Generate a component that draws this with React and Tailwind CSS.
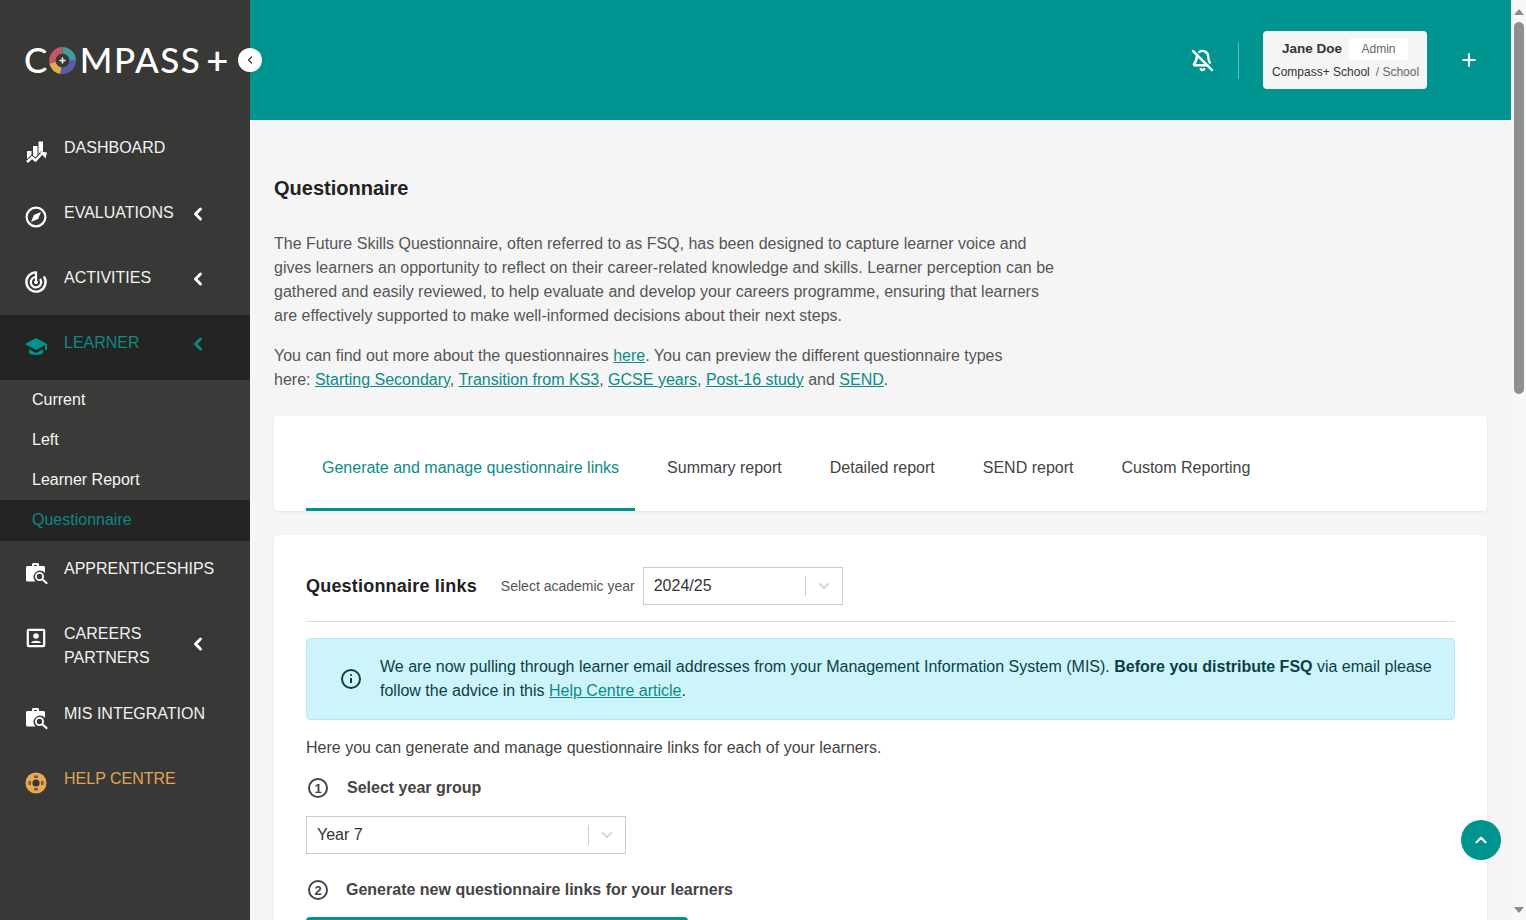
import React from 'react';
import { BellOff, ChevronDown, ChevronLeft, ChevronUp, Plus } from 'lucide-react';

const arial = '[font-family:"Liberation_Sans",Arial,sans-serif]';

function DashIcon() {
  return (
    <svg width="24" height="24" viewBox="0 0 24 24" fill="none">
      <path d="M3 11h4.500v9H3zM9 6h4.500v13H9zM14.500 1.500H19V15h-4.500z" fill="#fff" />
      <path d="M2.500 22.500l5.500-5 3.500 3 6-6.500 5 2" stroke="#383836" strokeWidth="4.500" />
      <path d="M3 22l5-4.500 3.500 3 6-6.500" stroke="#fff" strokeWidth="2.500" />
      <path d="M15.500 11.500l7.500 1-1.500 6z" fill="#fff" />
    </svg>
  );
}

function CompassIcon() {
  return (
    <svg width="24" height="24" viewBox="0 0 24 24" fill="none">
      <circle cx="12" cy="12" r="9.400" stroke="#fff" strokeWidth="2.200" />
      <path d="M17 7l-2.900 7.100L7 17l2.900-7.100z" fill="#fff" />
    </svg>
  );
}

function RadarIcon() {
  return (
    <svg width="24" height="24" viewBox="0 0 24 24" fill="none" stroke="#fff" strokeLinecap="round">
      <path d="M12 2.400A9.600 9.600 0 1 0 20.300 7.200" strokeWidth="2.400" />
      <path d="M12 7a5.200 5.200 0 1 0 4.500 2.600" strokeWidth="2.200" />
      <path d="M12 3v9" strokeWidth="2.200" />
      <circle cx="12" cy="12.200" r="1.500" fill="#fff" strokeWidth="1" />
    </svg>
  );
}

function CapIcon() {
  return (
    <svg width="24" height="24" viewBox="0 0 24 24" fill="#009490">
      <path d="M12 3L1 9l11 6 9-4.900V15h2V9z" />
      <path d="M5 14.200V18c2 2.600 12 2.600 14 0v-3.800l-7 3.800z" />
    </svg>
  );
}

function CaseSearchIcon() {
  return (
    <svg width="24" height="24" viewBox="0 0 24 24" fill="none">
      <path d="M8 5V3.500C8 2.600 8.600 2 9.500 2h4c.9 0 1.500.6 1.500 1.500V5h4.500c.8 0 1.500.7 1.500 1.500V20.500H3.500C2.700 20.500 2 19.800 2 19V6.500C2 5.700 2.700 5 3.500 5zm2-1v1h3V4z" fill="#fff" />
      <circle cx="16" cy="16" r="6.500" fill="#383836" />
      <circle cx="15.500" cy="15.500" r="3.600" stroke="#fff" strokeWidth="1.800" />
      <path d="M18.500 18.500l4 3.500" stroke="#fff" strokeWidth="2.200" strokeLinecap="round" />
    </svg>
  );
}

function ContactIcon() {
  return (
    <svg width="24" height="24" viewBox="0 0 24 24" fill="none">
      <rect x="3.800" y="3.800" width="16.400" height="16.400" rx="1" stroke="#fff" strokeWidth="2.200" />
      <circle cx="12" cy="10" r="2.800" fill="#fff" />
      <path d="M7 17c.6-3 9.400-3 10 0z" fill="#fff" />
    </svg>
  );
}

function LifebuoyIcon() {
  return (
    <svg width="24" height="24" viewBox="0 0 24 24" fill="none">
      <circle cx="12" cy="12" r="10.500" fill="#e8a955" />
      <circle cx="12" cy="12" r="3.600" fill="#383836" />
      <path d="M10 4.500h4v2.500h-4zM10 17h4v2.500h-4zM4.500 10H7v4H4.500zM17 10h2.500v4H17z" fill="#7d5f35" />
    </svg>
  );
}

function InfoIcon() {
  return (
    <svg width="20" height="20" viewBox="0 0 20 20" fill="none" stroke="#0b3f45">
      <circle cx="10" cy="10" r="9" strokeWidth="2" />
      <path d="M10 9v5" strokeWidth="2" />
      <circle cx="10" cy="6" r="1.100" fill="#0b3f45" stroke="none" />
    </svg>
  );
}

function LogoRing() {
  return (
    <svg width="27" height="27" viewBox="0 0 36 36" fill="none" strokeWidth="9">
      <path d="M18 4.500A13.500 13.500 0 0 0 5 21" stroke="#c8555f" />
      <path d="M5 21a13.500 13.500 0 0 0 11 10.400" stroke="#e3ac4c" />
      <path d="M16 31.400A13.500 13.500 0 0 0 31.500 18" stroke="#5a5ba6" />
      <path d="M31.500 18A13.500 13.500 0 0 0 18 4.500" stroke="#3f9c9c" />
      <circle cx="18" cy="18" r="9" fill="#383836" stroke="none" />
      <path d="M18 14v8M14 18h8" stroke="#fff" strokeWidth="2" />
    </svg>
  );
}

function NavItem({ icon, label, chevron, tall, colour = 'text-[#f2f2f2]', chevronColour = 'text-white', bg = '' }) {
  return (
    <div className={`flex items-start pl-6 pt-[16px] ${tall ? 'h-[80px]' : 'h-[65px]'} ${bg}`}>
      <span className="flex w-6 h-6 shrink-0 mt-[4px]">{icon}</span>
      <span className={`ml-4 ${chevron ? 'w-[122px]' : ''} shrink-0 text-base leading-6 whitespace-pre-line ${colour}`}>{label}</span>
      {chevron && (
        <ChevronLeft
          size={20}
          strokeWidth={3.500}
          className={`ml-[2px] ${tall ? 'mt-[12px]' : 'mt-[3px]'} ${chevronColour}`}
        />
      )}
    </div>
  );
}

function SubItem({ label, active }) {
  return (
    <div className={`flex items-center pl-8 text-base ${active ? 'h-[41px] pb-px bg-[#242422] text-[#0d8885]' : 'h-10 text-[#f7f7f7]'}`}>
      {label}
    </div>
  );
}

function Sidebar() {
  return (
    <aside className="w-[250px] shrink-0 h-full bg-[#383836] flex flex-col">
      <div className="relative h-[120px] flex items-center pl-6">
        <div className="flex items-center text-white text-[35px] leading-none -mt-[2px] [font-family:Lato,sans-serif] font-medium tracking-[1.500px]">
          <span>C</span>
          <span className="flex mt-[2px]"><LogoRing /></span>
          <span className="ml-[4px]">MPASS</span>
          <span className="ml-[5px] text-[38px] font-semibold">+</span>
        </div>
        <div className="absolute left-[238px] top-[48px] w-6 h-6 rounded-full bg-white flex items-center justify-center">
          <ChevronLeft size={12} strokeWidth={2.500} className="text-[#383836]" />
        </div>
      </div>
      <NavItem icon={<DashIcon />} label="DASHBOARD" />
      <NavItem icon={<CompassIcon />} label="EVALUATIONS" chevron />
      <NavItem icon={<RadarIcon />} label="ACTIVITIES" chevron />
      <NavItem
        icon={<CapIcon />}
        label="LEARNER"
        chevron
        colour="text-[#0d8885]"
        chevronColour="text-[#0d8885]"
        bg="bg-[#242422]"
      />
      <div className="bg-[#3a3a38]">
        <SubItem label="Current" />
        <SubItem label="Left" />
        <SubItem label="Learner Report" />
        <SubItem label="Questionnaire" active />
      </div>
      <NavItem icon={<CaseSearchIcon />} label="APPRENTICESHIPS" />
      <NavItem icon={<ContactIcon />} label={'CAREERS\nPARTNERS'} chevron tall />
      <NavItem icon={<CaseSearchIcon />} label="MIS INTEGRATION" />
      <NavItem icon={<LifebuoyIcon />} label="HELP CENTRE" colour="text-[#e0a558]" />
    </aside>
  );
}

function Header() {
  return (
    <header className="h-[120px] shrink-0 bg-[#009490] flex items-center justify-end pr-[32px]">
      <BellOff size={23} strokeWidth={2.500} className="text-white" />
      <div className="w-px h-[37px] bg-[#5fbcb9] ml-[24px] mr-[24px]" />
      <div className="w-[164px] h-[58px] bg-[#f5f5f5] rounded flex flex-col pl-[9px] pt-[7px]">
        <div className="flex items-center h-[22px]">
          <span className="ml-[10px] text-[13.5px] font-bold text-[#333]">Jane Doe</span>
          <span className="ml-[7px] w-[59px] h-[22px] bg-white rounded text-xs text-[#666] flex items-center justify-center">Admin</span>
        </div>
        <div className="mt-[4px] text-xs leading-4 whitespace-nowrap">
          <span className="text-[#333]">Compass+ School</span>
          <span className="ml-[6px] text-[#666]">/ School</span>
        </div>
      </div>
      <Plus size={20} strokeWidth={2.500} className="text-white ml-[32px]" />
    </header>
  );
}

function Select({ value, width }) {
  return (
    <div className={`${width} h-[38px] bg-white border border-[#ccc] flex items-center pl-[10px] text-base text-[#333]`}>
      <span className="flex-1">{value}</span>
      <span className="w-px h-5 bg-[#ccc]" />
      <ChevronDown size={18} strokeWidth={2} className="mx-[9px] text-[#ccc]" />
    </div>
  );
}

function A({ children }) {
  return <a href="#" className="text-[#0c8b88] underline">{children}</a>;
}

function StepNumber({ n }) {
  return (
    <span className="w-5 h-5 rounded-full border-2 border-[#444] flex items-center justify-center text-[13px] font-bold leading-none text-[#444]">{n}</span>
  );
}

function Tabs() {
  const tabs = ['Summary report', 'Detailed report', 'SEND report', 'Custom Reporting'];
  return (
    <div className="h-[95px] bg-white rounded shadow-[0_1px_3px_rgba(0,0,0,0.08)] flex px-8">
      <div className="h-full px-4 pt-[11px] border-b-[3px] border-[#009490] text-[#0c8b88] flex items-center">
        Generate and manage questionnaire links
      </div>
      {tabs.map((t) => (
        <div key={t} className="h-full ml-4 px-4 pt-[11px] pb-[3px] flex items-center text-[#444]">{t}</div>
      ))}
    </div>
  );
}

function LinksCard() {
  return (
    <div className="mt-6 bg-white rounded shadow-[0_1px_3px_rgba(0,0,0,0.08)] px-8 pt-8 h-[500px]">
      <div className="flex items-center h-[38px]">
        <h2 className="text-lg font-bold text-[#222] tracking-[0.2px]">Questionnaire links</h2>
        <span className="ml-[24px] text-sm text-[#555]">Select academic year</span>
        <span className="ml-[8px]"><Select value="2024/25" width="w-[200px]" /></span>
      </div>
      <div className="mt-[16px] h-px bg-[#ddd]" />
      <div className="mt-[16px] h-[82px] rounded bg-[#cdf4fb] border border-[#b8e6ed] flex items-center pl-[34px] pr-[22px] text-[#0b3f45]">
        <span className="shrink-0"><InfoIcon /></span>
        <p className="ml-[19px]">
          We are now pulling through learner email addresses from your Management Information System (MIS). <b>Before you distribute FSQ</b> via email please follow the advice in this <A>Help Centre article</A>.
        </p>
      </div>
      <p className="mt-[16px] text-[#444]">Here you can generate and manage questionnaire links for each of your learners.</p>
      <div className="mt-[16px] flex items-center h-6">
        <span className="ml-[2px]"><StepNumber n="1" /></span>
        <span className="ml-[19px] font-bold text-[#444]">Select year group</span>
      </div>
      <div className="mt-[16px]"><Select value="Year 7" width="w-[320px]" /></div>
      <div className="mt-[24px] flex items-center h-6">
        <span className="ml-[2px]"><StepNumber n="2" /></span>
        <span className="ml-[18px] font-bold text-[#444]">Generate new questionnaire links for your learners</span>
      </div>
      <div className="mt-[15px] w-[382px] h-10 bg-[#009490] rounded" />
    </div>
  );
}

function Scrollbar() {
  return (
    <div className="w-[15px] shrink-0 h-full bg-[#f8f8f8] flex flex-col items-center">
      <svg width="10" height="6" viewBox="0 0 10 6" className="mt-[9px]" fill="#8a8a8a"><path d="M5 0l5 6H0z" /></svg>
      <div className="mt-[7px] w-[10px] h-[372px] rounded-full bg-[#8f8f8f]" />
      <svg width="10" height="6" viewBox="0 0 10 6" className="mt-auto mb-[7px]" fill="#8a8a8a"><path d="M5 6l5-6H0z" /></svg>
    </div>
  );
}

export default function App() {
  return (
    <div className={`relative h-[920px] w-full flex overflow-hidden bg-[#f5f5f5] text-base ${arial}`}>
      <Sidebar />
      <div className="flex-1 min-w-0 flex flex-col overflow-hidden">
        <Header />
        <main className="px-6 pt-[55px]">
          <h1 className="text-xl leading-[26px] font-bold text-[#222]">Questionnaire</h1>
          <p className="mt-[31px] w-[785px] leading-6 text-[#555]">
            The Future Skills Questionnaire, often referred to as FSQ, has been designed to capture learner voice and gives learners an opportunity to reflect on their career-related knowledge and skills. Learner perception can be gathered and easily reviewed, to help evaluate and develop your careers programme, ensuring that learners are effectively supported to make well-informed decisions about their next steps.
          </p>
          <p className="mt-[16px] w-[785px] leading-6 text-[#555]">
            You can find out more about the questionnaires <A>here</A>. You can preview the different questionnaire types<br />here: <A>Starting Secondary</A>, <A>Transition from KS3</A>, <A>GCSE years</A>, <A>Post-16 study</A> and <A>SEND</A>.
          </p>
          <div className="mt-[24px]"><Tabs /></div>
          <LinksCard />
        </main>
      </div>
      <Scrollbar />
      <button className="absolute left-[1461px] top-[820px] w-10 h-10 rounded-full bg-[#009490] flex items-center justify-center">
        <ChevronUp size={18} strokeWidth={3} className="text-white" />
      </button>
    </div>
  );
}
